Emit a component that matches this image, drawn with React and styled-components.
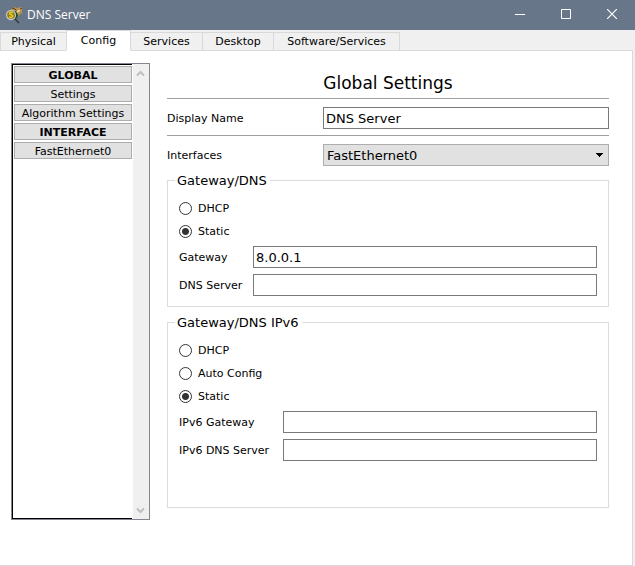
import React, { useState } from "react";
import styled, { createGlobalStyle } from "styled-components";

const GlobalStyle = createGlobalStyle`
  *, *::before, *::after { box-sizing: border-box; }
  body {
    margin: 0;
    background: #f0f0f0;
    color: #000;
    font: 11px/17px Verdana, "DejaVu Sans", sans-serif;
  }
  button, input, select { font: inherit; color: inherit; margin: 0; border-radius: 0; }
`;

const Window = styled.div`
  display: flex;
  flex-direction: column;
  min-height: 100vh;
`;

const TitleBar = styled.header`
  display: flex;
  align-items: center;
  height: 30px;
  padding-left: 5px;
  background: #687689;
  color: #fff;
`;

const WindowTitle = styled.span`
  flex: 1;
  margin-left: 4px;
  font: 12px/18px "Segoe UI", "Open Sans", sans-serif;
`;

const CaptionButton = styled.button`
  display: flex;
  align-items: center;
  justify-content: center;
  width: 46px;
  height: 30px;
  padding: 0 0 2px;
  border: 0;
  background: transparent;
`;

const TabBar = styled.nav`
  display: flex;
  align-items: flex-end;
  height: 21px;
  margin-bottom: -1px;
`;

const Tab = styled.button`
  width: ${(p) => p.$width}px;
  height: ${(p) => (p.$active ? 21 : 19)}px;
  margin-right: -1px;
  padding: 0;
  border: 1px solid #d9d9d9;
  border-bottom-color: ${(p) => (p.$active ? "#fff" : "#d9d9d9")};
  background: ${(p) => (p.$active ? "#fff" : "#f0f0f0")};
  z-index: ${(p) => (p.$active ? 1 : 0)};
  line-height: 18px;
  white-space: nowrap;
`;

const Pane = styled.main`
  flex: 1;
  display: flex;
  gap: 17px;
  margin-right: 2px;
  padding: 12px 23px 45px 11px;
  border: 1px solid #d9d9d9;
  border-left: 0;
  background: #fff;
`;

const Sidebar = styled.aside`
  display: flex;
  flex: none;
  width: 139px;
  border: 1px solid #828790;
`;

const NavList = styled.div`
  flex: 1;
  display: flex;
  flex-direction: column;
  gap: 2px;
  padding: 1px 0 1px 1px;
  border: 1px solid #000;
  border-right: 0;
`;

const NavButton = styled.button`
  height: 17px;
  padding: 1px 0 0;
  border: 1px solid #adadad;
  background: #e1e1e1;
  line-height: 15px;
  white-space: nowrap;
  font-weight: ${(p) => (p.$heading ? "bold" : "normal")};
`;

const ScrollTrack = styled.div`
  display: flex;
  flex-direction: column;
  justify-content: space-between;
  width: 16px;
  margin-left: 1px;
  background: #f0f0f0;
`;

const ScrollButton = styled.button`
  display: flex;
  align-items: center;
  justify-content: center;
  height: 17px;
  padding: 0 1px 0 0;
  border: 0;
  background: transparent;
`;

const Settings = styled.form`
  flex: 1;
  min-width: 0;
  display: flex;
  flex-direction: column;
  padding: 10px 0 12px;
`;

const Heading = styled.h1`
  margin: 0 0 5px;
  font-size: 17px;
  line-height: 20px;
  font-weight: normal;
  text-align: center;
`;

const Divider = styled.hr`
  width: 100%;
  height: 1px;
  margin: 0;
  border: 0;
  background: #a0a0a0;
`;

const Field = styled.div`
  display: grid;
  grid-template-columns: ${(p) => p.$labelWidth}px minmax(0, 1fr);
  align-items: center;
`;

const TopField = styled(Field)`
  margin: 8px 0 6px;
`;

const TextBox = styled.input`
  width: 100%;
  height: 22px;
  padding: 0 2px;
  border: 1px solid #7a7a7a;
  background: #fff;
  font-size: 13px;
  outline: none;
`;

const SelectWrap = styled.div`
  position: relative;
`;

const Select = styled.select`
  display: block;
  width: 100%;
  height: 22px;
  padding: 0 20px 0 3px;
  border: 1px solid #adadad;
  background: #e1e1e1;
  font-size: 13px;
  appearance: none;
`;

const SelectArrow = styled.svg`
  position: absolute;
  top: 9px;
  right: 6px;
  pointer-events: none;
`;

const Group = styled.fieldset`
  display: flex;
  flex-direction: column;
  gap: 6px;
  flex: ${(p) => (p.$grow ? 1 : "none")};
  min-width: 0;
  margin: 0 0 ${(p) => (p.$grow ? 0 : 7)}px;
  padding: 11px 11px 10px;
  border: 1px solid #dcdcdc;
`;

const Legend = styled.legend`
  margin-left: -4px;
  padding: 0 3px 0 2px;
  font-size: 13px;
  line-height: 17px;
`;

const RadioLabel = styled.label`
  display: flex;
  align-items: center;
  align-self: flex-start;
  gap: 6px;
  height: 17px;
  line-height: 18px;
`;

const Radio = styled.input`
  appearance: none;
  width: 13px;
  height: 13px;
  border: 1px solid #333;
  border-radius: 50%;
  background: #fff;
  &:checked {
    background: radial-gradient(circle, #333 0 3px, #fff 4px);
  }
`;

function AppIcon() {
  return (
    <svg width="18" height="18" viewBox="0 0 18 18" aria-hidden="true">
      <path d="M6 3 10 1l1 1 6-1v6l-4 3-5-2z" fill="#b8924a" />
      <path d="m10 3 2 2 5-3M7 2l3 1" fill="none" stroke="#5b4220" />
      <path d="m11 5 4-2v2l-3 2z" fill="#ecd79a" />
      <path d="M8 5h3l2 4-1 3-4 2z" fill="#17502a" />
      <circle cx="6" cy="9" r="4.500" fill="#8a8116" stroke="#bcc1c4" strokeWidth="1.300" />
      <path d="M8 6.700c-3-1-4 .4-3 1.600l2 .8c1.700 1.500-.5 3-3 1.800" fill="none" stroke="#f2c61c" strokeWidth="1.500" />
      <path d="m10 13 4 4" stroke="#34383f" strokeWidth="1.600" />
    </svg>
  );
}

function Chevron({ down }) {
  return (
    <svg width="9" height="8" viewBox="0 0 9 8" aria-hidden="true">
      <path d={down ? "M1 1.500 4.500 5 8 1.500" : "M1 6.500 4.500 3 8 6.500"} fill="none" stroke="#bfbfbf" strokeWidth="2" />
    </svg>
  );
}

const tabs = [
  ["Physical", 67],
  ["Config", 65],
  ["Services", 73],
  ["Desktop", 72],
  ["Software/Services", 127],
];

const navItems = [
  { label: "GLOBAL", heading: true },
  { label: "Settings" },
  { label: "Algorithm Settings" },
  { label: "INTERFACE", heading: true },
  { label: "FastEthernet0" },
];

function RadioOptions({ name, options }) {
  const [value, setValue] = useState("Static");
  return options.map((option) => (
    <RadioLabel key={option}>
      <Radio type="radio" name={name} checked={value === option} onChange={() => setValue(option)} />
      {option}
    </RadioLabel>
  ));
}

function TextField({ id, label, value = "", labelWidth }) {
  return (
    <Field $labelWidth={labelWidth}>
      <label htmlFor={id}>{label}</label>
      <TextBox id={id} type="text" defaultValue={value} />
    </Field>
  );
}

export default function App() {
  const [active, setActive] = useState("Config");
  return (
    <Window>
      <GlobalStyle />
      <TitleBar>
        <AppIcon />
        <WindowTitle>DNS Server</WindowTitle>
        <CaptionButton aria-label="Minimize">
          <svg width="10" height="10"><path d="M0 5.500h10" stroke="#fff" /></svg>
        </CaptionButton>
        <CaptionButton aria-label="Maximize">
          <svg width="11" height="10"><path d="M.5.5h9v9h-9z" fill="none" stroke="#fff" /></svg>
        </CaptionButton>
        <CaptionButton aria-label="Close">
          <svg width="10" height="10"><path d="m0 0 10 10M10 0 0 10" stroke="#fff" strokeWidth="1.200" /></svg>
        </CaptionButton>
      </TitleBar>
      <TabBar>
        {tabs.map(([label, width]) => (
          <Tab key={label} type="button" $width={width} $active={active === label} onClick={() => setActive(label)}>
            {label}
          </Tab>
        ))}
      </TabBar>
      <Pane>
        <Sidebar>
          <NavList>
            {navItems.map((item) => (
              <NavButton key={item.label} type="button" $heading={item.heading}>
                {item.label}
              </NavButton>
            ))}
          </NavList>
          <ScrollTrack>
            <ScrollButton type="button" aria-label="Scroll up"><Chevron /></ScrollButton>
            <ScrollButton type="button" aria-label="Scroll down"><Chevron down /></ScrollButton>
          </ScrollTrack>
        </Sidebar>
        <Settings>
          <Heading>Global Settings</Heading>
          <Divider />
          <TopField $labelWidth={156}>
            <label htmlFor="display-name">Display Name</label>
            <TextBox id="display-name" type="text" defaultValue="DNS Server" />
          </TopField>
          <Divider />
          <TopField $labelWidth={156}>
            <label htmlFor="interfaces">Interfaces</label>
            <SelectWrap>
              <Select id="interfaces">
                <option>FastEthernet0</option>
              </Select>
              <SelectArrow width="7" height="4" viewBox="0 0 7 4" shapeRendering="crispEdges">
                <path d="M0 0h7v1H6v1H5v1H4v1H3V3H2V2H1V1H0z" />
              </SelectArrow>
            </SelectWrap>
          </TopField>
          <Group>
            <Legend>Gateway/DNS</Legend>
            <RadioOptions name="ipv4" options={["DHCP", "Static"]} />
            <TextField id="gateway" label="Gateway" value="8.0.0.1" labelWidth={74} />
            <TextField id="dns" label="DNS Server" labelWidth={74} />
          </Group>
          <Group $grow>
            <Legend>Gateway/DNS IPv6</Legend>
            <RadioOptions name="ipv6" options={["DHCP", "Auto Config", "Static"]} />
            <TextField id="gateway6" label="IPv6 Gateway" labelWidth={104} />
            <TextField id="dns6" label="IPv6 DNS Server" labelWidth={104} />
          </Group>
        </Settings>
      </Pane>
    </Window>
  );
}
